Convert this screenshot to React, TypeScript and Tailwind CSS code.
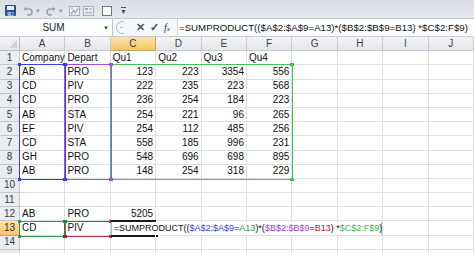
import React from "react";

const COLS = ["A", "B", "C", "D", "E", "F", "G", "H", "I", "J"];

type Cell = string | number | null;
const DATA: Cell[][] = [
  ["Company", "Depart", "Qu1", "Qu2", "Qu3", "Qu4"],
  ["AB", "PRO", 123, 223, 3354, 556],
  ["CD", "PIV", 222, 235, 223, 568],
  ["CD", "PRO", 236, 254, 184, 223],
  ["AB", "STA", 254, 221, 96, 265],
  ["EF", "PIV", 254, 112, 485, 256],
  ["CD", "STA", 558, 185, 996, 231],
  ["GH", "PRO", 548, 696, 698, 895],
  ["AB", "PRO", 148, 254, 318, 229],
  [],
  [],
  ["AB", "PRO", 5205],
  ["CD", "PIV"],
  [],
  [],
];

function Formula() {
  return (
    <>
      <span>=SUMPRODUCT((</span>
      <span className="text-[#3347e0]">$A$2:$A$9</span>
      <span>=</span>
      <span className="text-[#2f9a40]">A13</span>
      <span>)*(</span>
      <span className="text-[#a040d4]">$B$2:$B$9</span>
      <span>=</span>
      <span className="text-[#a8283c]">B13</span>
      <span>) *</span>
      <span className="text-[#3cb455]">$C$2:F$9</span>
      <span>)</span>
    </>
  );
}

function Toolbar() {
  return (
    <div className="h-[19px] flex items-center bg-gradient-to-b from-[#d9dee6] to-[#e4e8ee] border-b border-[#c3c9d1] pl-[5px]">
      <svg width="11" height="11" viewBox="0 0 11 11" className="mt-[3px]">
        <rect x="0" y="0" width="11" height="11" rx="1" fill="#2c4f9e" />
        <rect x="2" y="1" width="7" height="4" fill="#e8eef8" />
        <rect x="2.5" y="7" width="6" height="4" fill="#9fb4d8" />
        <rect x="6" y="7.5" width="1.5" height="2.5" fill="#2c4f9e" />
      </svg>
      <svg width="10" height="10" viewBox="0 0 10 10" className="ml-[7px] mt-[3px]">
        <path d="M2 3 H6 A3 3 0 0 1 6 9 H4" fill="none" stroke="#9aa1aa" strokeWidth="1.6" />
        <path d="M0.5 3 L3.2 0.8 L3.2 5.2 Z" fill="#9aa1aa" />
      </svg>
      <span className="ml-[3px] mt-[3px] text-[7px] leading-none text-[#9aa1aa]">▾</span>
      <svg width="10" height="10" viewBox="0 0 10 10" className="ml-[6px] mt-[3px]">
        <path d="M8 3 H4 A3 3 0 0 0 4 9 H6" fill="none" stroke="#9aa1aa" strokeWidth="1.6" />
        <path d="M9.5 3 L6.8 0.8 L6.8 5.2 Z" fill="#9aa1aa" />
      </svg>
      <span className="ml-[3px] mt-[3px] text-[7px] leading-none text-[#9aa1aa]">▾</span>
      <svg width="11" height="10" viewBox="0 0 11 10" className="ml-[6px] mt-[3px]">
        <rect x="0.5" y="0.5" width="10" height="9" fill="#eceff2" stroke="#a9afb7" />
        <path d="M2 8 L4.5 4.5 L6.5 6.5 L9 2.5" fill="none" stroke="#9aa1aa" strokeWidth="1.2" />
        <rect x="2" y="1.5" width="2" height="1.5" fill="#b5bbc2" />
      </svg>
      <svg width="11" height="10" viewBox="0 0 11 10" className="ml-[3px] mt-[3px]">
        <rect x="0.5" y="0.5" width="10" height="9" fill="#eceff2" stroke="#a9afb7" />
        <rect x="2" y="2" width="3" height="2" fill="#a3a9b1" />
        <rect x="6" y="2" width="3" height="2" fill="#c3c8ce" />
        <rect x="2" y="5.5" width="7" height="2.5" fill="#c3c8ce" />
      </svg>
      <div className="ml-[8px] mt-[3px] w-[10px] h-[10px] bg-white border border-[#6e757d]" />
      <div className="ml-[8px] mt-[4px] flex flex-col items-center">
        <div className="w-[5px] h-px bg-[#4b525a]" />
        <span className="text-[7px] leading-none text-[#4b525a]">▼</span>
      </div>
    </div>
  );
}

function FormulaBar() {
  return (
    <div className="h-[18px] flex items-stretch bg-[#f1f3f6] border-b border-[#c7ccd3] text-[10px] leading-none text-[#1d1d1d]">
      <div className="w-[113px] flex items-center bg-white border-r border-[#c3c8cf] pl-[4px] pr-[3px]">
        <span className="flex-1 text-center">SUM</span>
        <span className="text-[6px] text-[#444]">▼</span>
      </div>
      <div className="w-[64px] flex items-center bg-[#f6f7f9]">
        <div className="ml-[3px] w-[8px] h-[13px] rounded-l-full border border-r-0 border-[#b6bcc4] flex items-center justify-center">
          <div className="w-[3px] h-[1px] bg-[#b6bcc4] ml-[2px]" />
        </div>
        <span className="ml-[12px] text-[11px] font-bold text-[#55595e]">✕</span>
        <span className="ml-[5px] text-[11px] font-bold text-[#4a4e53]">✓</span>
        <span className="ml-[5px] text-[10px] italic font-['Liberation_Serif',serif] text-[#333]">
          f<span className="text-[7px]">x</span>
        </span>
      </div>
      <div className="flex-1 bg-white flex items-center pl-[1px] whitespace-nowrap overflow-hidden border-l border-[#d4d8dd]">
        <span className="text-[9.7px] text-[#111]">=SUMPRODUCT(($A$2:$A$9=A13)*($B$2:$B$9=B13) *$C$2:F$9)</span>
      </div>
    </div>
  );
}

function Grid() {
  return (
    <div className="relative">
      <div className="grid grid-cols-[20px_repeat(10,45.4px)] auto-rows-[14.2px] text-[10px] leading-none">
        <div className="relative bg-gradient-to-b from-[#f3f4f6] to-[#e2e5e9] border-r border-b border-[#b9bfc7]">
          <div className="absolute right-[2px] bottom-[2px] w-0 h-0 border-l-[8px] border-l-transparent border-b-[8px] border-b-[#cfd3d8]" />
        </div>
        {COLS.map((c) => (
          <div
            key={c}
            className={
              c === "C"
                ? "flex items-center justify-center bg-gradient-to-b from-[#fbe2a6] to-[#f4c766] border-r border-b border-[#c9a760] text-[#3a3a3a]"
                : "flex items-center justify-center bg-gradient-to-b from-[#f3f4f6] to-[#e3e6ea] border-r border-b border-[#c6cbd1] text-[#3f4246]"
            }
          >
            {c}
          </div>
        ))}
        {DATA.map((row, ri) => (
          <React.Fragment key={ri}>
            <div
              className={
                ri === 12
                  ? "flex items-center justify-center bg-gradient-to-b from-[#fbe2a6] to-[#f4c766] border-r border-b border-[#c9a760] text-[#2f2f2f]"
                  : "flex items-center justify-center bg-[#e9ecf0] border-r border-b border-[#c3c8cf] text-[#3a3d41]"
              }
            >
              {ri < 14 ? ri + 1 : ""}
            </div>
            {COLS.map((c, ci) => {
              const v = row[ci];
              const isNum = typeof v === "number";
              return (
                <div
                  key={c}
                  className={
                    "flex items-center border-r border-b border-[#dcdfe3] text-[#111] whitespace-nowrap overflow-visible " +
                    (isNum ? "justify-end pr-[2px]" : "justify-start pl-[2px]")
                  }
                >
                  {v ?? ""}
                </div>
              );
            })}
          </React.Fragment>
        ))}
      </div>

      {/* range highlights drawn over the sheet */}
      <div className="absolute left-[109.8px] top-[27.4px] w-[183.6px] h-[115.6px] border border-[#46c25c]" />
      <div className="absolute left-[64.4px] top-[27.4px] w-[47.4px] h-[115.6px] border border-[#a54fe0]" />
      <div className="absolute left-[19px] top-[27.4px] w-[47.4px] h-[115.6px] border border-[#3c3ce8]" />

      <div className="absolute left-[18px] top-[26.4px] w-[3px] h-[3px] bg-[#3c3ce8]" />
      <div className="absolute left-[63.4px] top-[26.4px] w-[4px] h-[3px] bg-[#3c3ce8]" />
      <div className="absolute left-[108.8px] top-[26.4px] w-[4px] h-[3px] bg-[#a54fe0]" />
      <div className="absolute left-[290.4px] top-[26.4px] w-[4px] h-[3px] bg-[#3cbf55]" />
      <div className="absolute left-[18px] top-[140.5px] w-[3px] h-[3px] bg-[#3c3ce8]" />
      <div className="absolute left-[63.4px] top-[140.5px] w-[4px] h-[3px] bg-[#3c3ce8]" />
      <div className="absolute left-[108.8px] top-[140.5px] w-[4px] h-[3px] bg-[#a54fe0]" />
      <div className="absolute left-[290.4px] top-[140.5px] w-[4px] h-[3px] bg-[#3cbf55]" />

      <div className="absolute left-[64.4px] top-[183.6px] w-[47.4px] h-[16.2px] border border-[#b23648]" />
      <div className="absolute left-[19px] top-[183.6px] w-[47.4px] h-[16.2px] border border-[#2f9a40]" />
      <div className="absolute left-[18px] top-[182.6px] w-[3px] h-[3px] bg-[#2f9a40]" />
      <div className="absolute left-[18px] top-[197.8px] w-[3px] h-[3px] bg-[#2f9a40]" />
      <div className="absolute left-[63.4px] top-[182.6px] w-[4px] h-[3px] bg-[#2f7a3a]" />
      <div className="absolute left-[63.4px] top-[197.8px] w-[4px] h-[3px] bg-[#8a2a3a]" />
      <div className="absolute left-[108.8px] top-[182.6px] w-[3px] h-[3px] bg-[#b23648]" />
      <div className="absolute left-[108.8px] top-[197.8px] w-[3px] h-[3px] bg-[#b23648]" />

      {/* in-cell editor for C13 */}
      <div className="absolute left-[110.8px] top-[184.6px] w-[271px] h-[13.4px] bg-white flex items-center pl-[2px] whitespace-nowrap text-[9px] leading-none text-[#111] border-l border-r border-[#7fcfcf]">
        <Formula />
      </div>
      <div className="absolute left-[111px] top-[183.4px] w-[45.4px] h-[2px] bg-[#1a1a1a]" />
      <div className="absolute left-[111px] top-[197.8px] w-[45.4px] h-[2px] bg-[#1a1a1a]" />
      <div className="absolute left-[154.6px] top-[197.3px] w-[4px] h-[4px] bg-[#1a1a1a] border border-white" />
    </div>
  );
}

export default function App() {
  return (
    <div className="w-[474px] h-[253px] overflow-hidden bg-white font-['Liberation_Sans',Arial,sans-serif]">
      <Toolbar />
      <FormulaBar />
      <Grid />
    </div>
  );
}
